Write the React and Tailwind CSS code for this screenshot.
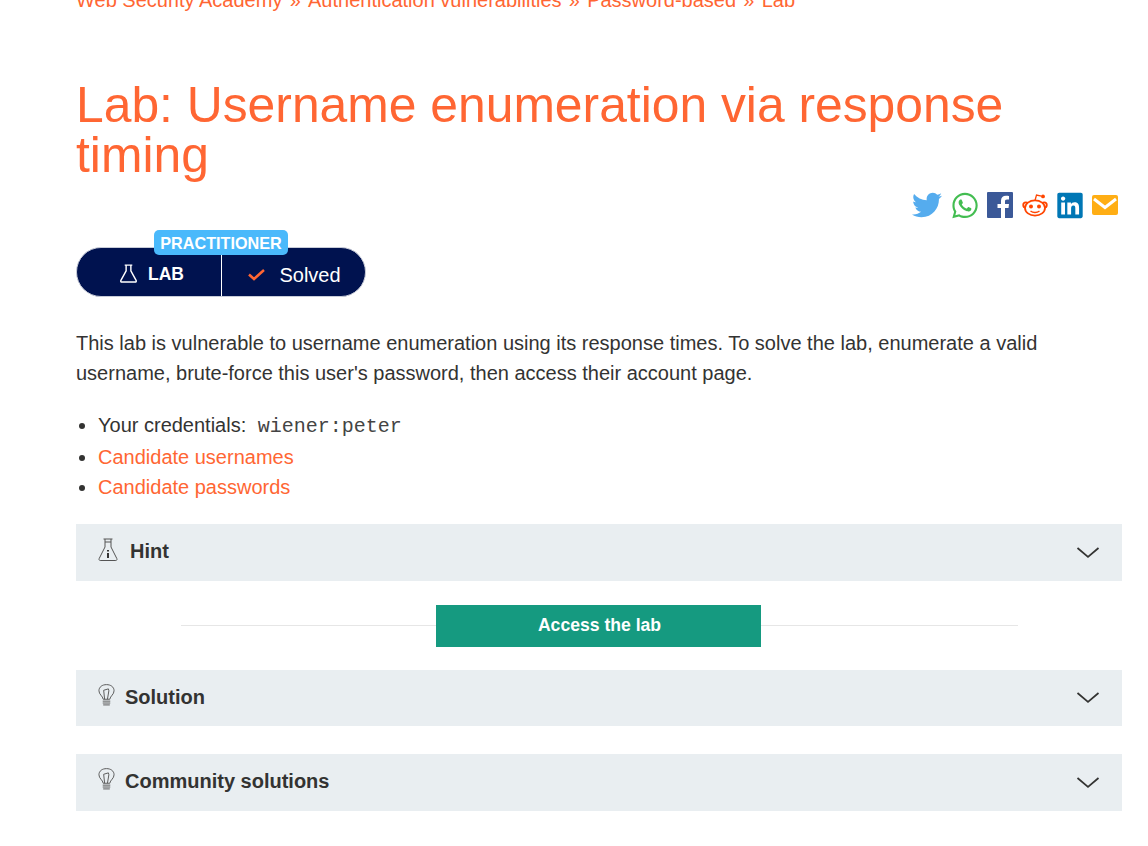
import { FaTwitter, FaWhatsapp, FaLinkedin } from 'react-icons/fa';

function Chevron() {
  return (
    <svg className="w-[24px] h-[14px]" viewBox="0 0 24 14" fill="none" stroke="#333332" strokeWidth="1.7">
      <path d="M1.500 2 L12 11 L22.500 2" />
    </svg>
  );
}

function Flask({ className }) {
  return (
    <svg className={className} viewBox="0 0 20 20" fill="none" stroke="currentColor" strokeWidth="1.5" strokeLinejoin="round">
      <path d="M6 1.200h8M7.500 1.200v6L2 17.200c-.5 1 0 1.800 1 1.800h14c1 0 1.500-.8 1-1.800L12.500 7.200v-6" />
    </svg>
  );
}

function HintFlask() {
  return (
    <svg className="w-[20px] h-[24px] -mt-[2px]" viewBox="0 0 20 24" fill="none" stroke="#555" strokeWidth="1">
      <path d="M5.500 1h9M7 1v8L1.200 20.500c-.5 1 0 2 1 2h15.600c1 0 1.500-1 1-2L13 9V1M7 4h6" />
      <path d="M10 12v1.500M10 15v5" strokeWidth="2" stroke="#333" />
    </svg>
  );
}

function Bulb() {
  return (
    <svg className="w-[17px] h-[24px] -mt-[4px]" viewBox="0 0 18 24" fill="none" stroke="#555" strokeWidth="1">
      <path d="M5.500 16.500C5 13 1 11.500 1 7.500 1 3.500 4.500 1 9 1s8 2.500 8 6.500c0 4-4 5.500-4.500 9z" />
      <path d="M7 16.500 6 7l5-1.500.5 2-1.500 9M5 18.500h8M5 20.500h8M5.500 22.500h7" />
    </svg>
  );
}

function Facebook() {
  return (
    <svg className="w-[26px] h-[26px]" viewBox="0 0 26 26">
      <rect width="26" height="26" rx="1" fill="#3b5998" />
      <path fill="#fff" d="M18 26V16h3.500l.5-4h-4V9.500c0-1.200.4-2 2-2h2V4c-.5 0-1.700-.2-3-.2-3 0-5 1.800-5 5V12h-3.500v4H14v10z" />
    </svg>
  );
}

function Reddit() {
  return (
    <svg className="w-[26px] h-[24px]" viewBox="0 0 26 24" fill="none" stroke="#ff4500" strokeWidth="1.800">
      <circle cx="3.800" cy="12" r="2.600" />
      <circle cx="22.200" cy="12" r="2.600" />
      <ellipse cx="13" cy="15" rx="10" ry="7.600" fill="#fff" />
      <path d="M13 7.500 14.500 2l5 1.200" strokeWidth="1.300" />
      <circle cx="21" cy="3.400" r="1.900" fill="#ff4500" stroke="none" />
      <circle cx="9" cy="13.500" r="2" fill="#ff4500" stroke="none" />
      <circle cx="17" cy="13.500" r="2" fill="#ff4500" stroke="none" />
      <path d="M8.500 18c2.500 2 6.500 2 9 0" strokeWidth="1.400" />
    </svg>
  );
}

function Panel({ icon, title, className }) {
  return (
    <div className={`flex items-center justify-between bg-[#e9eef1] pl-[22px] pr-[22px] ${className}`}>
      <div className="flex items-center pb-[3px] text-[20px] font-bold text-[#333332]">
        {icon}
        <span>{title}</span>
      </div>
      <Chevron />
    </div>
  );
}

export default function App() {
  return (
    <div className="bg-white font-['Liberation_Sans',Arial,sans-serif] text-[#333332] overflow-hidden h-[846px]">
      <div className="ml-[76px] w-[1046px]">
        {/* breadcrumb, cut off by the scroll position */}
        <div className="-mt-[12px] h-[24px] text-[20px] leading-[24px] text-[#ff6633] whitespace-nowrap">
          Web Security Academy<span className="mx-[1.700px]"> » </span>Authentication vulnerabilities<span className="mx-[1.700px]"> » </span>Password-based<span className="mx-[1.700px]"> » </span>Lab
        </div>

        <h1 className="mt-[68px] text-[49.800px] leading-[50px] font-normal text-[#ff6633]">
          Lab: Username enumeration via response timing
        </h1>

        <div className="flex justify-end items-center gap-[9px] pr-[4px] h-[30px] mt-[10px]">
          <FaTwitter className="text-[#55acee] w-[30px] h-[30px] mr-[1px]" />
          <FaWhatsapp className="text-[#43bd51] w-[26px] h-[29px]" />
          <Facebook />
          <Reddit />
          <FaLinkedin className="text-[#0077b5] w-[26px] h-[29px]" />
          <svg className="w-[26px] h-[20px]" viewBox="0 0 26 20">
            <rect width="26" height="20" rx="2" fill="#ffae14" />
            <path d="M2 4 13 12.500 24 4" fill="none" stroke="#fff" strokeWidth="3" />
          </svg>
        </div>

        <div className="relative mt-[27px] w-[290px] h-[50px] rounded-full bg-[#00124f] border border-[#c8ccd8] text-white flex items-center">
          <span className="absolute -top-[18px] left-[77px] h-[25px] w-[134px] pt-[1px] rounded-[5px] bg-[#4ab9fb] text-[16.200px] font-bold leading-[25px] text-center">
            PRACTITIONER
          </span>
          <div className="w-[145px] h-full pt-[5px] pl-[5px] flex items-center justify-center gap-[10px] border-r border-white font-bold text-[17.500px]">
            <Flask className="w-[19px] h-[19px] -mt-[2px]" />
            <span>LAB</span>
          </div>
          <div className="flex-1 pt-[5px] pl-[2px] flex items-center justify-center gap-[14px] text-[20px]">
            <svg className="w-[17px] h-[13px]" viewBox="0 0 17 13" fill="none" stroke="#ff6633" strokeWidth="2.500">
              <path d="M1 6.500 6 11 16 2" />
            </svg>
            <span>Solved</span>
          </div>
        </div>

        <p className="mt-[31px] text-[20px] leading-[30px]">
          This lab is vulnerable to username enumeration using its response times. To solve the lab, enumerate a valid username, brute-force this user's password, then access their account page.
        </p>

        <ul className="mt-[22px] list-disc pl-[22px] text-[20px] leading-[30px]">
          <li className="h-[32px]">
            Your credentials: <code className="ml-[6px] font-['Liberation_Mono',monospace] text-[20px] text-[#444]">wiener:peter</code>
          </li>
          <li className="text-[#ff6633] marker:text-[#333332]">Candidate usernames</li>
          <li className="text-[#ff6633] marker:text-[#333332]">Candidate passwords</li>
        </ul>

        <Panel className="mt-[22px] h-[57px]" title="Hint" icon={<span className="mr-[12px] flex"><HintFlask /></span>} />

        <div className="relative mt-[24px] h-[42px] flex justify-center w-[1046px]">
          <div className="absolute left-[105px] w-[837px] top-[20px] h-px bg-[#e6e6e6]" />
          <button className="relative -ml-[2px] w-[325px] h-[42px] pb-[2px] pl-[3px] bg-[#159a80] text-white font-bold text-[17.600px]">
            Access the lab
          </button>
        </div>

        <Panel className="mt-[23px] h-[56px]" title="Solution" icon={<span className="mr-[10px] flex"><Bulb /></span>} />
        <Panel className="mt-[28px] h-[57px]" title="Community solutions" icon={<span className="mr-[10px] flex"><Bulb /></span>} />
      </div>
    </div>
  );
}
